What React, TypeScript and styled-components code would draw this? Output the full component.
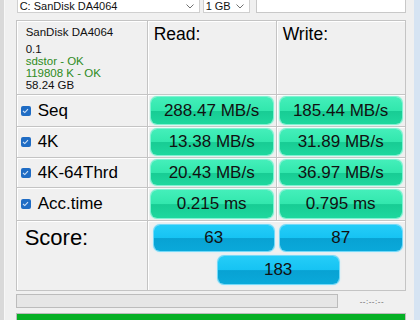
import React from "react";
import styled, { createGlobalStyle, css } from "styled-components";

const Global = createGlobalStyle`
  html, body { margin: 0; padding: 0; }
  body {
    width: 420px; height: 320px; overflow: hidden;
    background: #f0f0f0;
    font-family: "Liberation Sans", Arial, sans-serif;
  }
`;

const Window = styled.div`
  display: flex;
  width: 420px;
  height: 320px;
  overflow: hidden;
`;

const LeftEdge = styled.div`
  width: 4px;
  background: #d9d9d9;
  border-right: 1px solid #f7f7f7;
`;

const RightEdge = styled.div`
  width: 7px;
  background: #d6e4f3;
`;

const Main = styled.div`
  flex: 1;
  display: flex;
  flex-direction: column;
  padding: 0 8px 0 11px;
  background: #f0f0f0;
`;

const TopBar = styled.div`
  display: flex;
  height: 15px;
  align-items: stretch;
`;

const Combo = styled.div<{ $w: number; $ml: number }>`
  width: ${(p) => p.$w}px;
  margin-left: ${(p) => p.$ml}px;
  box-sizing: border-box;
  background: #fff;
  border: 1px solid #cfcfcf;
  border-top: none;
  display: flex;
  align-items: center;
  justify-content: space-between;
  padding: 0 5px 0 2px;
  font-size: 11px;
  color: #111;
`;

const TextBox = styled.div`
  flex: 1;
  margin-left: 6px;
  background: #fff;
  border: 1px solid #c8c8c8;
  border-top: none;
`;

const Chevron = () => (
  <svg width="8" height="5" viewBox="0 0 8 5">
    <path d="M0.5 0.5 L4 4 L7.5 0.5" fill="none" stroke="#707070" strokeWidth="1" />
  </svg>
);

const Panel = styled.div`
  margin-top: 7px;
  display: grid;
  grid-template-columns: 131px 129px 129px;
  grid-template-rows: 74px 32px 31px 30px 33px 70px;
  box-sizing: border-box;
  border-top: 1px solid #c4c4c4;
  border-left: 1px solid #c4c4c4;
`;

const Cell = styled.div<{ $span?: number }>`
  box-sizing: border-box;
  border-right: 1px solid #c4c4c4;
  border-bottom: 1px solid #c4c4c4;
  box-shadow: inset 1px 1px 0 #ffffff;
  ${(p) => p.$span && css`grid-column: span ${p.$span};`}
`;

const InfoCell = styled(Cell)`
  padding: 4px 0 0 9px;
  font-size: 11.5px;
  line-height: 12px;
  color: #111;
`;

const InfoTitle = styled.div`
  font-size: 11.5px;
  line-height: 14px;
  margin-bottom: 4px;
`;

const Line = styled.div<{ $ok?: boolean }>`
  color: ${(p) => (p.$ok ? "#2e8b22" : "#111")};
`;

const HeadCell = styled(Cell)`
  padding: 3px 0 0 6px;
  font-size: 17.5px;
  color: #000;
`;

const LabelCell = styled(Cell)`
  display: flex;
  align-items: center;
  gap: 7px;
  padding-left: 4px;
  font-size: 17px;
  color: #000;
`;

const Check = styled.span`
  width: 10px;
  height: 10px;
  border-radius: 2px;
  background: #1f6cc4;
  display: inline-flex;
  align-items: center;
  justify-content: center;
`;

const ValueCell = styled(Cell)`
  padding: 2px 3px 2px 2px;
  display: flex;
`;

const pillColors = {
  green: css`
    background: linear-gradient(to bottom, #44efba 0%, #32e7ad 50%, #18cc94 52%, #1ed89e 100%);
    box-shadow: 0 0 0 1px #7ff2d2, 0 0 2px 1px #b8f7e4;
  `,
  blue: css`
    background: linear-gradient(to bottom, #25cdf8 0%, #16c3f3 50%, #08a2d3 52%, #0aa9da 100%);
    box-shadow: 0 0 0 1px #74d9f8, 0 0 2px 1px #b9ebfb;
  `,
};

const Pill = styled.div<{ $kind: "green" | "blue"; $w?: number; $h?: number }>`
  ${(p) => pillColors[p.$kind]}
  flex: ${(p) => (p.$w ? "none" : "1")};
  width: ${(p) => (p.$w ? `${p.$w}px` : "auto")};
  height: ${(p) => (p.$h ? `${p.$h}px` : "auto")};
  margin-left: 1px;
  border-radius: 6px;
  display: flex;
  align-items: center;
  justify-content: center;
  font-size: 17px;
  color: #111;
`;

const ScoreLabel = styled(Cell)`
  padding: 4px 0 0 8px;
  font-size: 22px;
  color: #000;
`;

const ScoreArea = styled(Cell)`
  display: grid;
  grid-template-columns: 121px 123px;
  column-gap: 5px;
  row-gap: 5px;
  padding: 4px 0 0 5px;
  align-content: start;
`;

const ScoreTotal = styled.div`
  grid-column: 1 / span 2;
  padding-left: 64px;
`;

const StatusRow = styled.div`
  display: flex;
  align-items: center;
  margin-top: 3px;
  height: 14px;
`;

const Progress = styled.div`
  width: 322px;
  height: 14px;
  box-sizing: border-box;
  background: #e6e6e6;
  border: 1px solid #bcbcbc;
`;

const Timer = styled.div`
  margin-left: 22px;
  font-size: 8px;
  color: #606060;
  letter-spacing: 0.5px;
`;

const Green = styled.div`
  margin-top: 5px;
  height: 10px;
  box-sizing: border-box;
  background: #06b025;
  border: 1px solid #bcbcbc;
  border-bottom: none;
`;

const CheckMark = () => (
  <svg width="7" height="6" viewBox="0 0 7 6">
    <path d="M1 3 L2.8 4.6 L6 1.2" fill="none" stroke="#cfe2f7" strokeWidth="1.1" />
  </svg>
);

const rows = [
  ["Seq", "288.47 MB/s", "185.44 MB/s"],
  ["4K", "13.38 MB/s", "31.89 MB/s"],
  ["4K-64Thrd", "20.43 MB/s", "36.97 MB/s"],
  ["Acc.time", "0.215 ms", "0.795 ms"],
];

export default function App() {
  return (
    <>
      <Global />
      <Window>
        <LeftEdge />
        <Main>
          <TopBar>
            <Combo $w={183} $ml={1}>
              <span>C: SanDisk DA4064</span>
              <Chevron />
            </Combo>
            <Combo $w={47} $ml={3}>
              <span>1 GB</span>
              <Chevron />
            </Combo>
            <TextBox />
          </TopBar>
          <Panel>
            <InfoCell>
              <InfoTitle>SanDisk DA4064</InfoTitle>
              <Line>0.1</Line>
              <Line $ok>sdstor - OK</Line>
              <Line $ok>119808 K - OK</Line>
              <Line>58.24 GB</Line>
            </InfoCell>
            <HeadCell>Read:</HeadCell>
            <HeadCell>Write:</HeadCell>
            {rows.map(([label, r, w]) => (
              <React.Fragment key={label}>
                <LabelCell>
                  <Check>
                    <CheckMark />
                  </Check>
                  {label}
                </LabelCell>
                <ValueCell>
                  <Pill $kind="green">{r}</Pill>
                </ValueCell>
                <ValueCell>
                  <Pill $kind="green">{w}</Pill>
                </ValueCell>
              </React.Fragment>
            ))}
            <ScoreLabel>Score:</ScoreLabel>
            <ScoreArea $span={2}>
              <Pill $kind="blue" $h={26}>63</Pill>
              <Pill $kind="blue" $h={26}>87</Pill>
              <ScoreTotal>
                <Pill $kind="blue" $w={121} $h={28}>183</Pill>
              </ScoreTotal>
            </ScoreArea>
          </Panel>
          <StatusRow>
            <Progress />
            <Timer>--:--:--</Timer>
          </StatusRow>
          <Green />
        </Main>
        <RightEdge />
      </Window>
    </>
  );
}
